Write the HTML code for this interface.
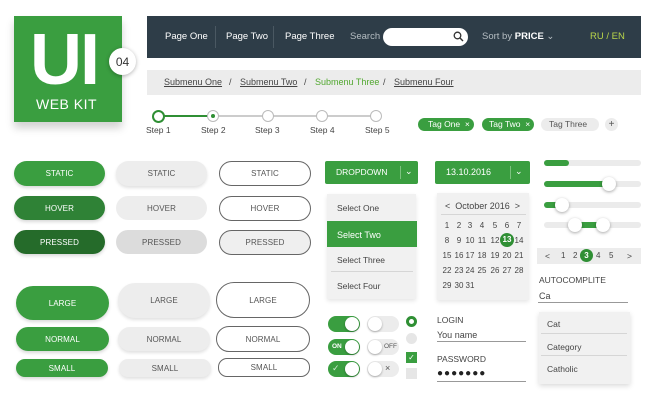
<!DOCTYPE html>
<html><head><meta charset="utf-8"><style>
*{margin:0;padding:0;box-sizing:border-box}
body{width:658px;height:401px;background:#fff;font-family:"Liberation Sans",sans-serif;position:relative;overflow:hidden;color:#444}
.a{position:absolute}
.c{display:flex;align-items:center;justify-content:center}
.btn{position:absolute;border-radius:14px;font-size:8px;display:flex;align-items:center;justify-content:center;letter-spacing:0.1px}
.g{background:#3a9e40;color:#fff;box-shadow:0 2px 3px rgba(0,0,0,.15)}
.gr{background:#ededed;color:#555;box-shadow:0 2px 3px rgba(0,0,0,.12)}
.o{background:#fff;border:1px solid #666;color:#555}
.t{position:absolute;font-size:9px;white-space:nowrap}
.trk{position:absolute;height:6px;border-radius:3px;background:#ebebeb}
.fill{position:absolute;height:6px;border-radius:3px;background:#3a9e40}
.knob{position:absolute;width:14px;height:14px;border-radius:50%;background:#fff;box-shadow:0 1px 3px rgba(0,0,0,.35)}
.tg{position:absolute;width:32px;height:16px;border-radius:8px}
.tk{position:absolute;top:1px;width:14px;height:14px;border-radius:50%;background:#fff;box-shadow:0 1px 2px rgba(0,0,0,.3)}
.cal span{position:absolute;font-size:8px;color:#444;width:14px;text-align:center}
</style></head><body>

<!-- logo -->
<div class="a" style="left:14px;top:16px;width:108px;height:106px;background:#3a9e40;box-shadow:0 6px 8px rgba(0,0,0,.18)"></div>
<div class="t" style="left:30px;top:20px;font-size:72px;font-weight:bold;color:#fff;letter-spacing:-2px;line-height:80px">UI</div>
<div class="t" style="left:36px;top:96px;font-size:14px;color:#fff;letter-spacing:0.5px">WEB KIT</div>
<div class="a c" style="left:109px;top:48px;width:27px;height:27px;border-radius:50%;background:#fff;box-shadow:0 1px 4px rgba(0,0,0,.3);font-size:12px;color:#333">04</div>

<!-- nav -->
<div class="a" style="left:147px;top:16px;width:494px;height:42px;background:#2e3d48"></div>
<div class="t" style="left:165px;top:31px;color:#fff;font-size:9.5px">Page One</div>
<div class="a" style="left:215px;top:26px;width:1px;height:22px;background:#4a5862"></div>
<div class="t" style="left:226px;top:31px;color:#fff;font-size:9.5px">Page Two</div>
<div class="a" style="left:273px;top:26px;width:1px;height:22px;background:#4a5862"></div>
<div class="t" style="left:285px;top:31px;color:#fff;font-size:9.5px">Page Three</div>
<div class="t" style="left:350px;top:31px;color:#b5bdc2;font-size:9.5px">Search</div>
<div class="a" style="left:383px;top:28px;width:85px;height:18px;border-radius:9px;background:#fff"></div>
<svg class="a" style="left:453px;top:31px" width="11" height="11"><circle cx="4.5" cy="4.5" r="3.3" stroke="#333" stroke-width="1.3" fill="none"/><line x1="7" y1="7" x2="10" y2="10" stroke="#333" stroke-width="1.4"/></svg>
<div class="t" style="left:482px;top:31px;color:#b5bdc2;font-size:9.5px">Sort by <b style="color:#fff">PRICE</b> &#8964;</div>
<div class="t" style="left:590px;top:31px;color:#b9d54a;font-size:9.5px">RU / EN</div>

<!-- breadcrumb -->
<div class="a" style="left:147px;top:70px;width:494px;height:25px;background:#ececec"></div>
<div class="t" style="left:164px;top:77px;text-decoration:underline;color:#444">Submenu One</div>
<div class="t" style="left:229px;top:77px">/</div>
<div class="t" style="left:240px;top:77px;text-decoration:underline;color:#444">Submenu Two</div>
<div class="t" style="left:304px;top:77px">/</div>
<div class="t" style="left:315px;top:77px;color:#52a830">Submenu Three</div>
<div class="t" style="left:383px;top:77px">/</div>
<div class="t" style="left:394px;top:77px;text-decoration:underline;color:#444">Submenu Four</div>

<!-- stepper -->
<div class="a" style="left:158px;top:115px;width:220px;height:2px;background:#ccc"></div>
<div class="a" style="left:158px;top:115px;width:55px;height:2px;background:#2f8f34"></div>
<div class="a" style="left:152px;top:110px;width:13px;height:13px;border-radius:50%;border:2px solid #2f8f34;background:#fff"></div>
<div class="a c" style="left:207px;top:110px;width:12px;height:12px;border-radius:50%;border:1.5px solid #bbb;background:#fff"><div style="width:4px;height:4px;border-radius:50%;background:#2f8f34"></div></div>
<div class="a" style="left:262px;top:110px;width:12px;height:12px;border-radius:50%;border:1.5px solid #bbb;background:#fff"></div>
<div class="a" style="left:316px;top:110px;width:12px;height:12px;border-radius:50%;border:1.5px solid #bbb;background:#fff"></div>
<div class="a" style="left:370px;top:110px;width:12px;height:12px;border-radius:50%;border:1.5px solid #bbb;background:#fff"></div>
<div class="t" style="left:146px;top:125px;font-size:8.5px">Step 1</div>
<div class="t" style="left:201px;top:125px;font-size:8.5px">Step 2</div>
<div class="t" style="left:255px;top:125px;font-size:8.5px">Step 3</div>
<div class="t" style="left:310px;top:125px;font-size:8.5px">Step 4</div>
<div class="t" style="left:365px;top:125px;font-size:8.5px">Step 5</div>

<!-- tags -->
<div class="a" style="left:418px;top:118px;width:56px;height:13px;border-radius:7px;background:#3a9e40;color:#fff;font-size:8.5px;padding-left:10px;line-height:13px">Tag One &nbsp;×</div>
<div class="a" style="left:482px;top:118px;width:52px;height:13px;border-radius:7px;background:#3a9e40;color:#fff;font-size:8.5px;padding-left:7px;line-height:13px">Tag Two &nbsp;×</div>
<div class="a" style="left:541px;top:118px;width:58px;height:13px;border-radius:7px;background:#ececec;color:#555;font-size:8.5px;padding-left:8px;line-height:13px">Tag Three</div>
<div class="a c" style="left:605px;top:118px;width:13px;height:13px;border-radius:50%;background:#ececec;color:#555;font-size:10px">+</div>

<!-- buttons -->
<div class="btn g" style="left:14px;top:161px;width:91px;height:25px">STATIC</div>
<div class="btn g" style="left:14px;top:196px;width:91px;height:24px;background:#2f8236">HOVER</div>
<div class="btn g" style="left:14px;top:230px;width:91px;height:24px;background:#256b2a">PRESSED</div>
<div class="btn gr" style="left:116px;top:161px;width:91px;height:25px">STATIC</div>
<div class="btn gr" style="left:116px;top:196px;width:91px;height:24px;box-shadow:none">HOVER</div>
<div class="btn gr" style="left:116px;top:230px;width:91px;height:24px;background:#dcdcdc;box-shadow:none">PRESSED</div>
<div class="btn o" style="left:219px;top:161px;width:92px;height:25px">STATIC</div>
<div class="btn o" style="left:219px;top:196px;width:92px;height:25px">HOVER</div>
<div class="btn o" style="left:219px;top:230px;width:92px;height:25px;background:#efefef">PRESSED</div>

<div class="btn g" style="left:16px;top:286px;width:93px;height:34px;border-radius:17px">LARGE</div>
<div class="btn g" style="left:16px;top:327px;width:93px;height:24px">NORMAL</div>
<div class="btn g" style="left:16px;top:359px;width:92px;height:18px;border-radius:9px">SMALL</div>
<div class="btn gr" style="left:118px;top:283px;width:92px;height:35px;border-radius:17px">LARGE</div>
<div class="btn gr" style="left:118px;top:327px;width:92px;height:24px">NORMAL</div>
<div class="btn gr" style="left:119px;top:359px;width:92px;height:18px;border-radius:9px">SMALL</div>
<div class="btn o" style="left:216px;top:282px;width:94px;height:36px;border-radius:18px">LARGE</div>
<div class="btn o" style="left:216px;top:326px;width:94px;height:26px">NORMAL</div>
<div class="btn o" style="left:218px;top:358px;width:92px;height:19px;border-radius:9px">SMALL</div>

<!-- dropdown -->
<div class="a" style="left:325px;top:161px;width:93px;height:23px;border-radius:2px;background:#3a9e40;color:#fff;font-size:8.5px;line-height:23px;padding-left:11px">DROPDOWN</div>
<div class="a" style="left:400px;top:166px;width:1px;height:13px;background:#7cc27f"></div>
<div class="t" style="left:405px;top:166px;color:#fff;font-size:9px">&#8964;</div>
<div class="a" style="left:327px;top:194px;width:89px;height:105px;background:#f1f1f1;box-shadow:0 2px 4px rgba(0,0,0,.1)"></div>
<div class="t" style="left:337px;top:203px;font-size:8.5px">Select One</div>
<div class="a" style="left:327px;top:221px;width:90px;height:26px;background:#3a9e40"></div>
<div class="t" style="left:337px;top:230px;font-size:9px;color:#fff">Select Two</div>
<div class="t" style="left:337px;top:255px;font-size:8.5px">Select Three</div>
<div class="a" style="left:331px;top:271px;width:82px;height:1px;background:#d6d6d6"></div>
<div class="t" style="left:337px;top:281px;font-size:8.5px">Select Four</div>

<!-- date -->
<div class="a" style="left:435px;top:161px;width:95px;height:23px;border-radius:2px;background:#3a9e40;color:#fff;font-size:9px;line-height:23px;padding-left:11px">13.10.2016</div>
<div class="a" style="left:510px;top:166px;width:1px;height:13px;background:#7cc27f"></div>
<div class="t" style="left:515px;top:166px;color:#fff;font-size:9px">&#8964;</div>
<div class="a" style="left:437px;top:193px;width:92px;height:107px;background:#f1f1f1;box-shadow:0 2px 4px rgba(0,0,0,.1)"></div>
<div class="t" style="left:445px;top:201px;font-size:9px">&lt; &nbsp;October 2016 &nbsp;&gt;</div>
<div class="a" style="left:441px;top:214px;width:85px;height:1px;background:#d6d6d6"></div>
<div class="cal">
<span style="left:440px;top:221px">1</span><span style="left:452px;top:221px">2</span><span style="left:463px;top:221px">3</span><span style="left:475px;top:221px">4</span><span style="left:488px;top:221px">5</span><span style="left:500px;top:221px">6</span><span style="left:512px;top:221px">7</span>
<span style="left:440px;top:236px">8</span><span style="left:452px;top:236px">9</span><span style="left:463px;top:236px">10</span><span style="left:475px;top:236px">11</span><span style="left:488px;top:236px">12</span><span style="left:500px;top:233px;width:14px;height:14px;border-radius:50%;background:#2f8f34;color:#fff;font-weight:bold;line-height:14px">13</span><span style="left:512px;top:236px">14</span>
<span style="left:440px;top:251px">15</span><span style="left:452px;top:251px">16</span><span style="left:463px;top:251px">17</span><span style="left:475px;top:251px">18</span><span style="left:488px;top:251px">19</span><span style="left:500px;top:251px">20</span><span style="left:512px;top:251px">21</span>
<span style="left:440px;top:266px">22</span><span style="left:452px;top:266px">23</span><span style="left:463px;top:266px">24</span><span style="left:475px;top:266px">25</span><span style="left:488px;top:266px">26</span><span style="left:500px;top:266px">27</span><span style="left:512px;top:266px">28</span>
<span style="left:440px;top:281px">29</span><span style="left:452px;top:281px">30</span><span style="left:463px;top:281px">31</span>
</div>

<!-- sliders -->
<div class="trk" style="left:544px;top:160px;width:97px"></div>
<div class="fill" style="left:544px;top:160px;width:25px"></div>
<div class="trk" style="left:544px;top:181px;width:97px"></div>
<div class="fill" style="left:544px;top:181px;width:65px"></div>
<div class="knob" style="left:602px;top:177px"></div>
<div class="trk" style="left:544px;top:202px;width:97px"></div>
<div class="fill" style="left:544px;top:202px;width:18px"></div>
<div class="knob" style="left:555px;top:198px"></div>
<div class="trk" style="left:544px;top:222px;width:97px"></div>
<div class="fill" style="left:575px;top:222px;width:28px"></div>
<div class="knob" style="left:568px;top:218px"></div>
<div class="knob" style="left:596px;top:218px"></div>

<!-- pagination -->
<div class="a" style="left:537px;top:248px;width:104px;height:16px;background:#ececec"></div>
<div class="t" style="left:545px;top:251px;font-size:8.5px">&lt;</div>
<div class="t" style="left:561px;top:251px;font-size:8px">1</div>
<div class="t" style="left:573px;top:251px;font-size:8px">2</div>
<div class="a c" style="left:580px;top:249px;width:13px;height:13px;border-radius:50%;background:#2f8f34;color:#fff;font-size:8px;font-weight:bold">3</div>
<div class="t" style="left:596px;top:251px;font-size:8px">4</div>
<div class="t" style="left:609px;top:251px;font-size:8px">5</div>
<div class="t" style="left:627px;top:251px;font-size:8.5px">&gt;</div>

<!-- autocomplete -->
<div class="t" style="left:539px;top:275px;font-size:8.5px">AUTOCOMPLITE</div>
<div class="t" style="left:539px;top:291px;font-size:9px">Ca</div>
<div class="a" style="left:538px;top:302px;width:90px;height:1px;background:#999"></div>
<div class="a" style="left:539px;top:312px;width:91px;height:72px;background:#f1f1f1;box-shadow:0 2px 5px rgba(0,0,0,.15)"></div>
<div class="t" style="left:547px;top:319px;font-size:8.5px">Cat</div>
<div class="a" style="left:541px;top:333px;width:86px;height:1px;background:#d6d6d6"></div>
<div class="t" style="left:547px;top:342px;font-size:8.5px">Category</div>
<div class="a" style="left:541px;top:355px;width:86px;height:1px;background:#d6d6d6"></div>
<div class="t" style="left:547px;top:364px;font-size:8.5px">Catholic</div>

<!-- toggles -->
<div class="tg" style="left:328px;top:316px;background:#3a9e40"><div class="tk" style="left:17px"></div></div>
<div class="tg" style="left:328px;top:339px;background:#3a9e40"><span style="position:absolute;left:4px;top:4px;font-size:6.5px;color:#fff;font-weight:bold">ON</span><div class="tk" style="left:17px"></div></div>
<div class="tg" style="left:328px;top:361px;background:#3a9e40"><span style="position:absolute;left:4px;top:2px;font-size:9px;color:#cfe9cf">✓</span><div class="tk" style="left:17px"></div></div>
<div class="tg" style="left:367px;top:316px;background:#ececec"><div class="tk" style="left:1px"></div></div>
<div class="tg" style="left:367px;top:339px;background:#ececec"><div class="tk" style="left:1px"></div><span style="position:absolute;left:17px;top:4px;font-size:6.5px;color:#555">OFF</span></div>
<div class="tg" style="left:367px;top:361px;background:#ececec"><div class="tk" style="left:1px"></div><span style="position:absolute;left:18px;top:2px;font-size:9px;color:#555">×</span></div>
<div class="a" style="left:406px;top:316px;width:11px;height:11px;border-radius:50%;border:3px solid #2f8f34;background:#fff"></div>
<div class="a" style="left:406px;top:333px;width:11px;height:11px;border-radius:50%;background:#e6e6e6"></div>
<div class="a c" style="left:406px;top:352px;width:11px;height:11px;background:#3a9e40;color:#fff;font-size:8px">✓</div>
<div class="a" style="left:406px;top:368px;width:11px;height:11px;background:#e6e6e6"></div>

<!-- login -->
<div class="t" style="left:437px;top:315px;font-size:8.5px">LOGIN</div>
<div class="t" style="left:437px;top:330px;font-size:9px">You name</div>
<div class="a" style="left:437px;top:341px;width:89px;height:1px;background:#999"></div>
<div class="t" style="left:437px;top:354px;font-size:8.5px">PASSWORD</div>
<div class="t" style="left:437px;top:368px;font-size:10px;letter-spacing:1px;color:#222">●●●●●●●</div>
<div class="a" style="left:437px;top:381px;width:89px;height:1px;background:#999"></div>
</body></html>
